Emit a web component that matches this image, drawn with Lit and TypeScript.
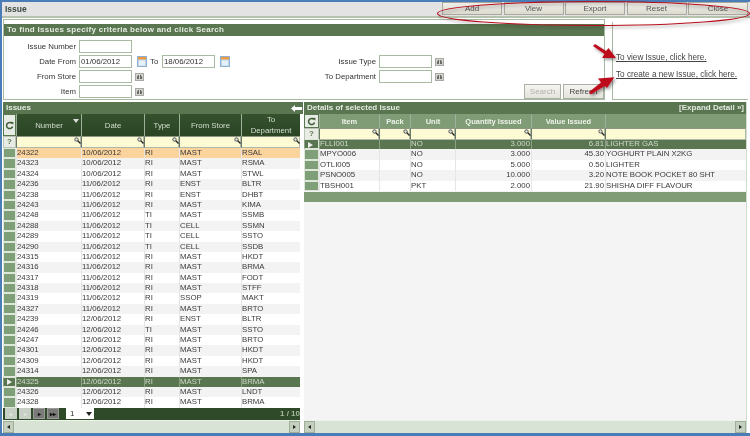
import { LitElement, html, css, svg } from 'lit';
import { customElement } from 'lit/decorators.js';

const issues = [
    ['24322', '10/06/2012', 'RI', 'MAST', 'RSAL'],
    ['24323', '10/06/2012', 'RI', 'MAST', 'RSMA'],
    ['24324', '10/06/2012', 'RI', 'MAST', 'STWL'],
    ['24236', '11/06/2012', 'RI', 'ENST', 'BLTR'],
    ['24238', '11/06/2012', 'RI', 'ENST', 'DHBT'],
    ['24243', '11/06/2012', 'RI', 'MAST', 'KIMA'],
    ['24248', '11/06/2012', 'TI', 'MAST', 'SSMB'],
    ['24288', '11/06/2012', 'TI', 'CELL', 'SSMN'],
    ['24289', '11/06/2012', 'TI', 'CELL', 'SSTO'],
    ['24290', '11/06/2012', 'TI', 'CELL', 'SSDB'],
    ['24315', '11/06/2012', 'RI', 'MAST', 'HKDT'],
    ['24316', '11/06/2012', 'RI', 'MAST', 'BRMA'],
    ['24317', '11/06/2012', 'RI', 'MAST', 'FODT'],
    ['24318', '11/06/2012', 'RI', 'MAST', 'STFF'],
    ['24319', '11/06/2012', 'RI', 'SSOP', 'MAKT'],
    ['24327', '11/06/2012', 'RI', 'MAST', 'BRTO'],
    ['24239', '12/06/2012', 'RI', 'ENST', 'BLTR'],
    ['24246', '12/06/2012', 'TI', 'MAST', 'SSTO'],
    ['24247', '12/06/2012', 'RI', 'MAST', 'BRTO'],
    ['24301', '12/06/2012', 'RI', 'MAST', 'HKDT'],
    ['24309', '12/06/2012', 'RI', 'MAST', 'HKDT'],
    ['24314', '12/06/2012', 'RI', 'MAST', 'SPA'],
    ['24325', '12/06/2012', 'RI', 'MAST', 'BRMA'],
    ['24326', '12/06/2012', 'RI', 'MAST', 'LNDT'],
    ['24328', '12/06/2012', 'RI', 'MAST', 'BRMA'],
];

const details = [
    ['FLLI001', '', 'NO', '3.000', '6.81', 'LIGHTER GAS'],
    ['MPYO006', '', 'NO', '3.000', '45.30', 'YOGHURT PLAIN X2KG'],
    ['OTLI005', '', 'NO', '5.000', '0.50', 'LIGHTER'],
    ['PSNO005', '', 'NO', '10.000', '3.20', 'NOTE BOOK POCKET 80 SHT'],
    ['TBSH001', '', 'PKT', '2.000', '21.90', 'SHISHA DIFF FLAVOUR'],
];

const calendar = html`<svg class="ico cal" width="10" height="11" viewBox="0 0 10 11">
  <rect x="0.5" y="0.5" width="9" height="10" fill="#bcd4ea" stroke="#8fb0d0"/>
  <rect x="1" y="1" width="8" height="2.5" fill="#ec9a45"/>
  <rect x="2" y="4.5" width="6" height="5" fill="#e6f0f8"/>
</svg>`;

const lookup = html`<svg class="ico" width="9" height="8" viewBox="0 0 9 8">
  <rect x="0.5" y="0.5" width="8" height="7" fill="#d4d4d0" stroke="#a8a8a4"/>
  <path d="M2 6V4l1-2h1v4zM7 6V4L6 2H5v4z" fill="#6a6a64"/>
</svg>`;

const magnifier = svg`<svg class="mag" width="7" height="7" viewBox="0 0 7 7">
  <circle cx="2.5" cy="2.5" r="1.7" fill="#dfe6e0" stroke="#444" stroke-width="0.9"/>
  <path d="M3.8 3.8L6.5 6.5" stroke="#222" stroke-width="1.3"/>
</svg>`;

const refreshIcon = html`<svg width="9" height="9" viewBox="0 0 9 9">
  <path d="M7 2.4A3.1 3.1 0 1 0 7.6 5.6" fill="none" stroke="#3c5a34" stroke-width="1.5"/>
  <path d="M5.6 0.8L8.4 1V3.8z" fill="#3c5a34"/>
</svg>`;

@customElement('app-root')
export class AppRoot extends LitElement {
    static styles = css`
    :host {
      display: block;
      width: 750px;
      height: 436px;
      overflow: hidden;
      font-family: 'Liberation Sans', Arial, sans-serif;
      font-size: 7.8px;
      color: #333;
    }
    .frame {
      position: relative;
      box-sizing: border-box;
      width: 750px;
      height: 436px;
      display: flex;
      flex-direction: column;
      background: #fff;
      border-top: 2px solid #4a7cb8;
      border-left: 2px solid #4a7cb8;
      border-bottom: 3px solid #4a7cb8;
      filter: blur(0.4px);
    }

    .titlebar {
      height: 14px;
      flex: none;
      display: flex;
      align-items: center;
      justify-content: space-between;
      background: #e3e3e3;
      border-bottom: 2px solid #b4c2ae;
    }
    .titlebar b { font-size: 8.5px; color: #3a4a40; padding-left: 3px; }
    .toolbar { display: flex; gap: 1.5px; align-self: flex-start; padding-right: 2px; }
    .toolbar span {
      box-sizing: border-box;
      width: 60px;
      height: 13px;
      display: flex;
      align-items: center;
      justify-content: center;
      font-size: 8px;
      color: #555;
      background: linear-gradient(#efeee8, #dddbd0);
      border: 1px solid #a9a99e;
    }

    .top {
      height: 83px;
      flex: none;
      display: flex;
      gap: 7px;
      padding: 1px 0 1px 1px;
      box-sizing: border-box;
    }
    .search {
      width: 602px;
      flex: none;
      box-sizing: border-box;
      border: 1px solid #a9b8a3;
      padding-top: 4px;
      display: flex;
      flex-direction: column;
    }
    .bar {
      background: #5a7650;
      color: #e4ebe0;
      font-weight: bold;
      font-size: 8px;
      height: 12px;
      line-height: 12px;
      padding-left: 3px;
      flex: none;
      display: flex;
      justify-content: space-between;
      align-items: center;
    }
    .search .bar { letter-spacing: 0.28px; padding-left: 3px; }
    .search-body { flex: 1; display: flex; padding-top: 3px; }
    .form {
      display: grid;
      grid-template-columns: 72px auto;
      grid-auto-rows: 15px;
      column-gap: 3px;
      align-items: center;
    }
    .form.one { width: 320px; flex: none; }
    .form.two { padding-top: 15px; grid-template-columns: 52px auto; }
    .lbl { text-align: right; white-space: nowrap; justify-self: end; }
    .field { display: flex; align-items: center; gap: 3px; }
    .input {
      box-sizing: border-box;
      width: 53px;
      height: 13px;
      line-height: 11px;
      padding-left: 1px;
      background: #fff;
      border: 1px solid #a9baa2;
    }
    .to { margin-right: 1px; width: 8px; }
    .ico { display: block; flex: none; }
    .ico.cal { margin-left: 2px; }
    .actions {
      margin-left: auto;
      align-self: flex-end;
      display: flex;
      gap: 2px;
    }
    .btn {
      box-sizing: border-box;
      height: 15px;
      line-height: 13px;
      text-align: center;
      font-size: 8px;
      background: linear-gradient(#f5f4f0, #e4e3dc);
      border: 1px solid #aab0a4;
      color: #444;
    }
    .btn.off { width: 37px; color: #b0b0aa; }
    .btn.on { width: 41px; }
    .help {
      flex: 1;
      border-left: 1px solid #a9b8a3;
      border-bottom: 1px solid #a9b8a3;
      margin: 3px 2px 0 0;
      padding: 32px 0 0 3px;
      display: flex;
      flex-direction: column;
      gap: 9px;
      font-size: 8.2px;
      color: #444;
    }
    .help a { text-decoration: underline; height: 8px; line-height: 8px; }

    .panes { flex: 1; min-height: 0; display: flex; gap: 1px; padding: 1px 0 0 1px; }
    .pane { display: flex; flex-direction: column; min-width: 0; }
    .pane.left { width: 300px; flex: none; }
    .pane.right { flex: 1; margin-right: 3px; border-right: 1px solid #d2dccd; }
    .tools { display: inline-flex; align-items: center; padding-right: 1px; }
    .grid { display: grid; align-items: stretch; }
    .left .grid { grid-template-columns: 13px 65px 63px 35px 62px 59px; width: 297px; }
    .right .grid { grid-template-columns: 15px 60px 31px 45px 76px 74px 1fr; }
    .head > div {
      display: flex;
      align-items: center;
      justify-content: center;
      text-align: center;
      position: relative;
      border-left: 1px solid #9fb09a;
    }
    .left .head { height: 22px; background: #2f4a28; color: #d5dfd0; }
    .left .head > div { background: linear-gradient(#34502d, #2b4525); line-height: 11px; }
    .right .head { height: 14px; background: #7f9c76; color: #eef3ea; font-weight: bold; }
    .right .head > div { background: #7f9c76; font-size: 7.5px; }
    .head .corner { background: #e6ebe3 !important; border: 1px solid #5a7650; box-sizing: border-box; }
    .sort {
      position: absolute;
      top: 5px;
      right: 2px;
      width: 0;
      height: 0;
      border: 3px solid transparent;
      border-top: 4px solid #ddd;
    }
    .filter { height: 12px; background: #fff; }
    .filter > div {
      position: relative;
      box-sizing: border-box;
      background: #fdfbd4;
      border: 1px solid #b0b8aa;
      border-left: 1px solid #6a7a64;
      border-top-color: #8b9785;
    }
    .right .filter { height: 11px; }
    .filter .q {
      background: #e8ece5;
      border-color: #b9c4b4;
      text-align: center;
      color: #5a7650;
      font-weight: bold;
      font-size: 8px;
      line-height: 10px;
    }
    .mag { position: absolute; right: -1px; top: 0; }
    .rows { display: flex; flex-direction: column; }
    .row { height: 10.4px; line-height: 10.4px; background: #fff; color: #3a3a3a; }
    .row:nth-child(even) { background: #f3f3f3; }
    .row > div { white-space: nowrap; overflow: hidden; border-left: 1px solid #e6e6e6; box-sizing: border-box; }
    .row .num { text-align: right; padding-right: 1px; }
    .row .rh { background: #7f9f78; border: 1px solid #dfe7db; position: relative; }
    .row.orange { background: #fbd39c; }
    .row.sel { background: #5a7650; color: #cfdaca; }
    .row.sel > div { border-left-color: #8ba083; }
    .row.sel .rh { background: #5a7650; }
    .arrow {
      position: absolute;
      left: 3px;
      top: 1.5px;
      width: 0;
      height: 0;
      border-left: 5px solid #eee;
      border-top: 3px solid transparent;
      border-bottom: 3px solid transparent;
    }
    .pager {
      height: 12px;
      width: 297px;
      flex: none;
      background: #2f4a28;
      display: flex;
      align-items: center;
      gap: 2px;
      padding-left: 2px;
      box-sizing: border-box;
      color: #a6b8a0;
      font-weight: bold;
      font-size: 8px;
    }
    .pager .pg {
      box-sizing: border-box;
      width: 12px;
      height: 11px;
      flex: none;
      background: #7a7a78;
      color: #111;
      font-size: 6px;
      line-height: 10px;
      text-align: center;
      border: 1px solid #9a9a98;
    }
    .pager .pg.dim { background: #c8cfc4; color: #dfe4dc; border-color: #c8cfc4; }
    .pager .sel-box {
      width: 28px;
      height: 11px;
      margin-left: 5px;
      background: #fff;
      color: #333;
      font-weight: normal;
      display: flex;
      align-items: center;
      justify-content: space-between;
      padding: 0 2px 0 4px;
      box-sizing: border-box;
    }
    .caret { width: 0; height: 0; border: 3px solid transparent; border-top: 4px solid #222; margin-top: 3px; }
    .pager .count { margin-left: auto; white-space: nowrap; }
    .scroll {
      height: 13px;
      flex: none;
      margin-top: auto;
      background: #d9e3d5;
      display: flex;
      justify-content: space-between;
      align-items: stretch;
      border-top: 1px solid #eef2ec;
      box-sizing: border-box;
    }
    .left .scroll { width: 297px; }
    .scroll span {
      width: 11px;
      background: #c4cfbf;
      border: 1px solid #9fae99;
      box-sizing: border-box;
      display: flex;
      align-items: center;
      justify-content: center;
    }
    .tri-l { width: 0; height: 0; border: 2.5px solid transparent; border-right: 3px solid #222; border-left: none; }
    .tri-r { width: 0; height: 0; border: 2.5px solid transparent; border-left: 3px solid #222; border-right: none; }
    .detail-body { flex: 1; min-height: 0; background: #f4f4f4; display: flex; flex-direction: column; }
    .detail-foot { height: 10px; margin-top: 1px; background: #7f9c76; flex: none; }

    .annot { position: absolute; left: -2px; top: -2px; pointer-events: none; }
  `;

    render() {
        return html`
    <div class="frame">
      <div class="titlebar">
        <b>Issue</b>
        <div class="toolbar">
          ${['Add', 'View', 'Export', 'Reset', 'Close'].map(t => html`<span>${t}</span>`)}
        </div>
      </div>

      <div class="top">
        <div class="search">
          <div class="bar">To find Issues specify criteria below and click Search</div>
          <div class="search-body">
            <div class="form one">
              <div class="lbl">Issue Number</div>
              <div class="field"><div class="input"></div></div>
              <div class="lbl">Date From</div>
              <div class="field">
                <div class="input">01/06/2012</div>${calendar}
                <span class="to">To</span>
                <div class="input">18/06/2012</div>${calendar}
              </div>
              <div class="lbl">From Store</div>
              <div class="field"><div class="input"></div>${lookup}</div>
              <div class="lbl">Item</div>
              <div class="field"><div class="input"></div>${lookup}</div>
            </div>
            <div class="form two">
              <div class="lbl">Issue Type</div>
              <div class="field"><div class="input"></div>${lookup}</div>
              <div class="lbl">To Department</div>
              <div class="field"><div class="input"></div>${lookup}</div>
            </div>
            <div class="actions">
              <div class="btn off">Search</div>
              <div class="btn on">Refresh</div>
            </div>
          </div>
        </div>
        <div class="help">
          <a>To view Issue, click here.</a>
          <a>To create a new Issue, click here.</a>
        </div>
      </div>

      <div class="panes">
        <div class="pane left">
          <div class="bar">
            <span>Issues</span>
            <span class="tools">
              <svg width="11" height="7" viewBox="0 0 11 7"><path d="M0 3.5L4 0V2H11V5H4V7z" fill="#fff"/></svg>
            </span>
          </div>
          <div class="grid head">
            <div class="corner">${refreshIcon}</div>
            <div>Number<i class="sort"></i></div>
            <div>Date</div>
            <div>Type</div>
            <div>From Store</div>
            <div>To<br />Department</div>
          </div>
          <div class="grid filter">
            <div class="q">?</div>
            ${[0, 1, 2, 3, 4].map(() => html`<div>${magnifier}</div>`)}
          </div>
          <div class="rows">
            ${issues.map((r, i) => html`
              <div class="grid row ${i === 0 ? 'orange' : ''} ${i === 22 ? 'sel' : ''}">
                <div class="rh">${i === 22 ? html`<i class="arrow"></i>` : ''}</div>
                ${r.map(c => html`<div>${c}</div>`)}
              </div>`)}
          </div>
          <div class="pager">
            <div class="pg dim">▸</div>
            <div class="pg dim">▸</div>
            <div class="pg">▸</div>
            <div class="pg">▸▸</div>
            <div class="sel-box">1<i class="caret"></i></div>
            <div class="count">1 / 10</div>
          </div>
          <div class="scroll"><span><i class="tri-l"></i></span><span><i class="tri-r"></i></span></div>
        </div>

        <div class="pane right">
          <div class="bar">
            <span>Details of selected Issue</span>
            <span style="padding-right:2px">[Expand Detail »]</span>
          </div>
          <div class="grid head">
            <div class="corner">${refreshIcon}</div>
            <div>Item</div>
            <div>Pack</div>
            <div>Unit</div>
            <div>Quantity Issued</div>
            <div>Value Issued</div>
            <div></div>
          </div>
          <div class="grid filter">
            <div class="q">?</div>
            ${[0, 1, 2, 3, 4].map(() => html`<div>${magnifier}</div>`)}
            <div></div>
          </div>
          <div class="detail-body">
            <div class="rows">
              ${details.map((r, i) => html`
                <div class="grid row ${i === 0 ? 'sel' : ''}">
                  <div class="rh">${i === 0 ? html`<i class="arrow"></i>` : ''}</div>
                  ${r.map((c, j) => html`<div class=${j === 3 || j === 4 ? 'num' : ''}>${c}</div>`)}
                </div>`)}
            </div>
            <div class="detail-foot"></div>
          </div>
          <div class="scroll"><span><i class="tri-l"></i></span><span><i class="tri-r"></i></span></div>
        </div>
      </div>

      <svg class="annot" width="750" height="436" viewBox="0 0 750 436">
        <defs>
          <filter id="sh" x="-20%" y="-40%" width="150%" height="200%">
            <feDropShadow dx="1.5" dy="2" stdDeviation="1.5" flood-color="#000" flood-opacity="0.4"/>
          </filter>
        </defs>
        <ellipse cx="593.5" cy="13.5" rx="156" ry="12" fill="none" stroke="#b5101e" stroke-width="1.2" filter="url(#sh)"/>
        <g filter="url(#sh)" fill="#bd0f1d">
          <path d="M593 46L595 44L606 51L608.5 48L616 58L602 58L604.5 54z"/>
          <path d="M589 92L590.5 94.5L605 86L607 88L614.3 77.3L598 78.5L601 82.5z"/>
        </g>
      </svg>
    </div>
    `;
    }
}
